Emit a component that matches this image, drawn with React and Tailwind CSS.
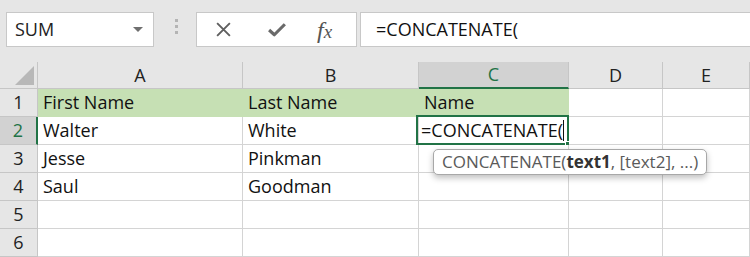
import React from 'react'

const COLS = [
  { key: 'A', w: 'w-[205px]' },
  { key: 'B', w: 'w-[176px]' },
  { key: 'C', w: 'w-[150px]' },
  { key: 'D', w: 'w-[94px]' },
  { key: 'E', w: 'flex-1' },
]

const ROWS = [
  ['First Name', 'Last Name', 'Name'],
  ['Walter', 'White', ''],
  ['Jesse', 'Pinkman', ''],
  ['Saul', 'Goodman', ''],
  ['', '', ''],
  ['', '', ''],
]

// ── Formula bar ──────────────────────────────────────────────────────────────

function FormulaBar() {
  return (
    <div className="h-[62px] bg-[#e6e6e6] flex items-start pt-[12px]">
      {/* Name box */}
      <div className="ml-[6px] w-[148px] h-[35px] bg-white border border-[#c8c8c8] flex items-center pl-[8px] pr-[8px]">
        <span className="flex-1 text-[18px] text-[#222]">SUM</span>
        <svg width="10" height="6" viewBox="0 0 10 6" className="mr-[2px]">
          <path d="M0 0 L10 0 L5 5 Z" fill="#6f6f6f" />
        </svg>
      </div>

      {/* grip dots */}
      <div className="ml-[21px] mt-[7px] flex flex-col gap-[3px]">
        <div className="w-[3px] h-[3px] bg-[#b4b4b4]" />
        <div className="w-[3px] h-[3px] bg-[#b4b4b4]" />
        <div className="w-[3px] h-[3px] bg-[#b4b4b4]" />
      </div>

      {/* cancel / enter / fx */}
      <div className="ml-[18px] w-[161px] h-[35px] bg-white border border-[#c8c8c8] flex items-center">
        <svg width="17" height="17" viewBox="0 0 16 16" className="ml-[18px]">
          <path d="M2 2 L14 14 M14 2 L2 14" stroke="#5f5f5f" strokeWidth="1.8" fill="none" />
        </svg>
        <svg width="21" height="17" viewBox="0 0 20 16" className="ml-[35px]">
          <path d="M2 8.5 L7 13 L17 3" stroke="#6a6a6a" strokeWidth="3" fill="none" strokeLinejoin="round" />
        </svg>
        <span className="ml-[29px] font-['Liberation_Serif',serif] italic text-[24px] text-[#555] leading-none">
          f<span className="text-[19px]">x</span>
        </span>
      </div>

      {/* formula input */}
      <div className="ml-[3px] flex-1 h-[35px] bg-white border border-[#c8c8c8] border-r-0 flex items-center pl-[15px]">
        <span className="text-[18px] text-[#111]">=CONCATENATE(</span>
      </div>
    </div>
  )
}

// ── Grid ─────────────────────────────────────────────────────────────────────

function HeaderRow() {
  return (
    <div className="flex h-[27px] bg-[#e6e6e6]">
      <div className="w-[38px] border-r border-b border-[#c6c6c6] flex items-end justify-end pr-[3px] pb-[3px]">
        <svg width="19" height="19" viewBox="0 0 19 19">
          <path d="M19 0 L19 19 L0 19 Z" fill="#b8b8b8" />
        </svg>
      </div>
      {COLS.map(c => {
        const active = c.key === 'C'
        return (
          <div
            key={c.key}
            className={`${c.w} flex items-center justify-center text-[18px] ${
              active
                ? 'bg-[#d2d2d2] text-[#217346] border-b-2 border-b-[#217346] border-r border-r-[#c6c6c6]'
                : 'text-[#222] border-r border-b border-[#c6c6c6]'
            }`}
          >
            {c.key}
          </div>
        )
      })}
    </div>
  )
}

function DataRow({ n, cells }) {
  const active = n === 2
  const green = n === 1
  return (
    <div className="flex h-[28px]">
      <div
        className={`w-[38px] flex items-center justify-center text-[18px] border-b border-[#c6c6c6] ${
          active
            ? 'bg-[#d2d2d2] text-[#217346] border-r-2 border-r-[#217346]'
            : 'bg-[#e6e6e6] text-[#222] border-r border-r-[#c6c6c6]'
        }`}
      >
        {n}
      </div>
      {COLS.map((c, i) => {
        const filled = green && i < 3
        const selected = active && c.key === 'C'
        return (
          <div
            key={c.key}
            className={`${c.w} relative flex items-center pl-[5px] text-[18px] text-[#111] whitespace-nowrap ${
              filled
                ? 'bg-[#c6e0b4] border-b border-[#c6e0b4]'
                : 'bg-white border-r border-b border-[#d4d4d4]'
            }`}
          >
            {cells[i]}
            {selected && (
              <div className="absolute -left-[3px] -top-[2px] -right-[1px] -bottom-[1px] border-2 border-[#217346] flex items-center pl-[3px]">
                <span className="text-[18px] text-[#111]">=CONCATENATE(</span>
                <span className="w-[1px] h-[21px] bg-[#111]" />
                <div className="absolute -right-[4px] -bottom-[4px] w-[6px] h-[6px] bg-[#217346] border border-white" />
              </div>
            )}
          </div>
        )
      })}
    </div>
  )
}

export default function App() {
  return (
    <div className="w-[750px] h-[257px] overflow-hidden bg-white relative font-['Open_Sans','Noto_Sans',sans-serif]">
      <FormulaBar />
      <HeaderRow />
      {ROWS.map((r, i) => (
        <DataRow key={i} n={i + 1} cells={r} />
      ))}

      {/* function hint tooltip */}
      <div className="absolute left-[433px] top-[149px] h-[26px] px-[8px] bg-white border border-[#a8a8a8] rounded-[5px] shadow-[0_3px_6px_rgba(0,0,0,0.25)] flex items-center text-[17px] text-[#5a5a5a] whitespace-nowrap">
        CONCATENATE(<b className="font-bold text-[#333]">text1</b>, [text2], ...)
      </div>
    </div>
  )
}
